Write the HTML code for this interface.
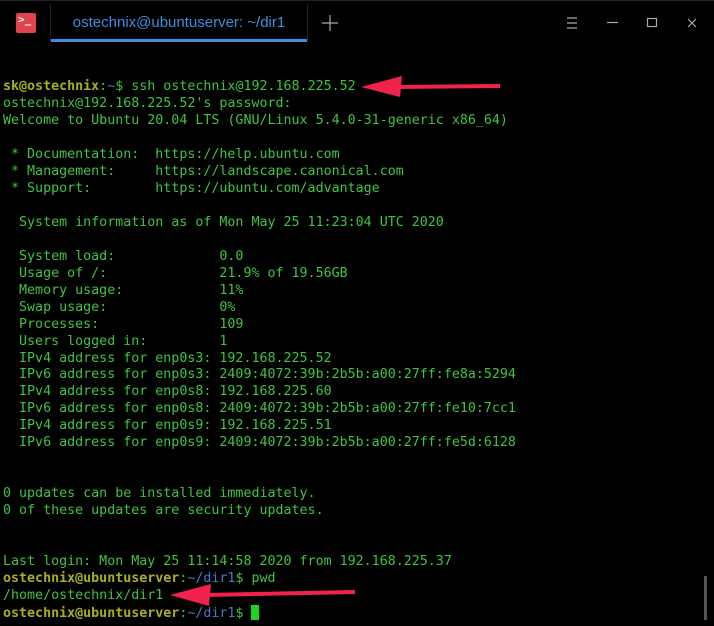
<!DOCTYPE html>
<html><head><meta charset="utf-8"><style>
html,body{margin:0;padding:0;background:#000;width:714px;height:626px;overflow:hidden;position:relative}
.top{position:absolute;left:0;top:0;width:714px;height:42px;background:#000;border-top:1px solid #222}
.icon{position:absolute;left:16px;top:12px;width:20px;height:20px;background:#e0424e;border-radius:2px;color:#fff;font:bold 11px "DejaVu Sans Mono",monospace;line-height:14px;padding-left:2px;box-sizing:border-box}
.tab{position:absolute;left:50px;top:3px;width:256px;height:38px;border-left:1px solid #222;border-right:1px solid #222;color:#3d8ee0;font:15px "Liberation Sans",sans-serif;text-align:center;line-height:38px}
.tab:after{content:"";position:absolute;left:0;right:0;bottom:0;height:3px;background:#3d8ee0}
.term{position:absolute;left:3px;top:79px;font:13.32px "DejaVu Sans Mono",monospace;line-height:16.97px;color:#3fc43f;white-space:pre}
.p{color:#a8b022;font-weight:bold}.b{color:#4a78c8}
.cur{display:inline-block;width:8px;height:15px;background:#1ed41e;vertical-align:-3px}
</style></head><body>
<div class="top">
<div class="icon">&gt;_</div>
<div class="tab">ostechnix@ubuntuserver: ~/dir1</div>
<svg width="714" height="42" style="position:absolute;left:0;top:0" stroke="#aaa" stroke-width="1.2" fill="none">
<path d="M330 14v16M322 22h16"/>
<path d="M567 17h10M567 22h10M567 27h10"/>
<path d="M607 21.5h11"/>
<rect x="647.5" y="17.5" width="9" height="8"/>
<path d="M688 18l8 8M696 18l-8 8"/>
</svg>
</div>
<div class="term"><span class="p">sk@ostechnix</span>:<span class="b">~</span>$ ssh ostechnix@192.168.225.52
ostechnix@192.168.225.52's password:
Welcome to Ubuntu 20.04 LTS (GNU/Linux 5.4.0-31-generic x86_64)

 * Documentation:  https://help.ubuntu.com
 * Management:     https://landscape.canonical.com
 * Support:        https://ubuntu.com/advantage

  System information as of Mon May 25 11:23:04 UTC 2020

  System load:             0.0
  Usage of /:              21.9% of 19.56GB
  Memory usage:            11%
  Swap usage:              0%
  Processes:               109
  Users logged in:         1
  IPv4 address for enp0s3: 192.168.225.52
  IPv6 address for enp0s3: 2409:4072:39b:2b5b:a00:27ff:fe8a:5294
  IPv4 address for enp0s8: 192.168.225.60
  IPv6 address for enp0s8: 2409:4072:39b:2b5b:a00:27ff:fe10:7cc1
  IPv4 address for enp0s9: 192.168.225.51
  IPv6 address for enp0s9: 2409:4072:39b:2b5b:a00:27ff:fe5d:6128


0 updates can be installed immediately.
0 of these updates are security updates.


Last login: Mon May 25 11:14:58 2020 from 192.168.225.37
<span class="p">ostechnix@ubuntuserver</span>:<span class="b">~/dir1</span>$ pwd
/home/ostechnix/dir1
<span class="p">ostechnix@ubuntuserver</span>:<span class="b">~/dir1</span>$ <span class="cur"></span></div>
<svg width="714" height="626" style="position:absolute;left:0;top:0">
<path d="M500 86L395 87" stroke="#f2224c" stroke-width="4"/>
<path d="M361 87L402 76L400 97Z" fill="#f2224c"/>
<path d="M355 592L205 595" stroke="#f2224c" stroke-width="4"/>
<path d="M170 595L211 584L209 606Z" fill="#f2224c"/>
<rect x="704" y="576" width="3" height="44" fill="#555"/>
</svg>
</body></html>
